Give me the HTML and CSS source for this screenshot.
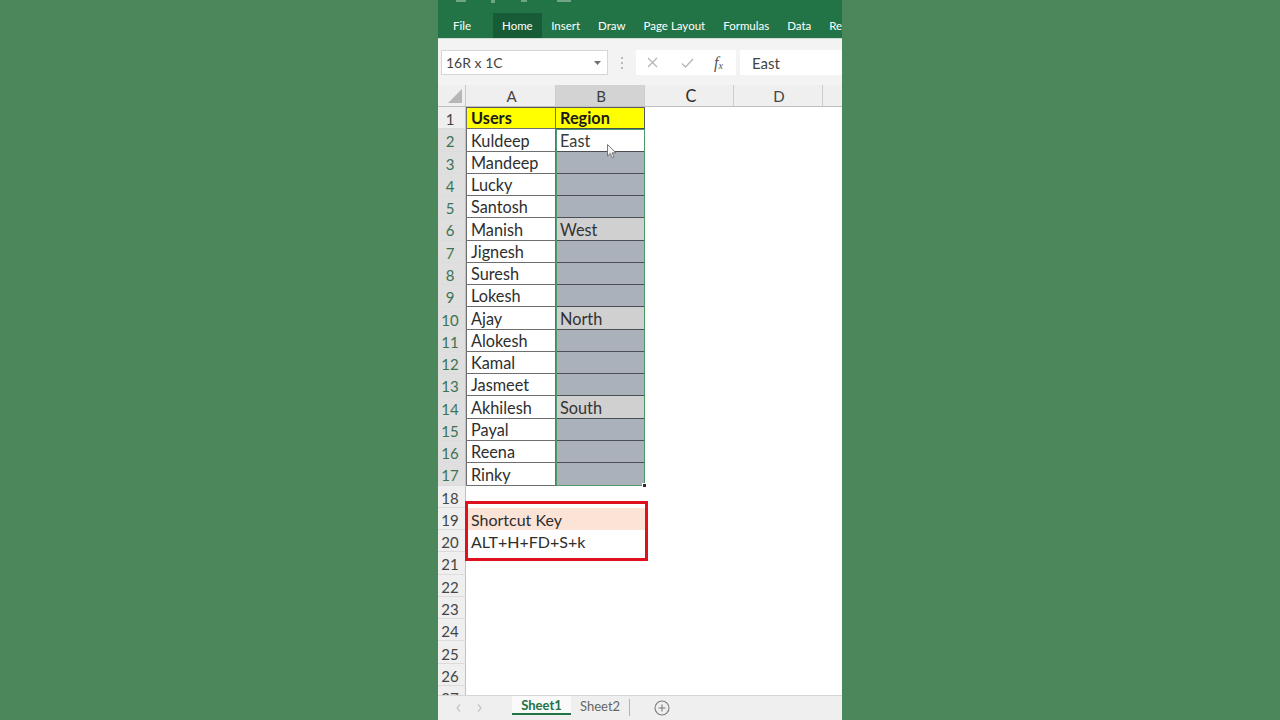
FILE: index.html
```html
<!DOCTYPE html>
<html lang="en">
<head>
<meta charset="utf-8">
<title>Excel - Region fill</title>
<link rel="stylesheet" href="styles.css">
</head>
<body>
<div class="app">
  <header class="ribbon">
    <div class="qat"><span class="q q1"></span><span class="q q2"></span><span class="q q3"></span><span class="q q4"></span></div>
    <nav class="tabs">
      <span class="tab file">File</span>
      <span class="tab active">Home</span>
      <span class="tab">Insert</span>
      <span class="tab">Draw</span>
      <span class="tab">Page Layout</span>
      <span class="tab">Formulas</span>
      <span class="tab">Data</span>
      <span class="tab">Re</span>
    </nav>
  </header>

  <div class="fbar">
    <div class="namebox">
      <span>16R x 1C</span>
      <svg class="dd" width="7" height="4" viewBox="0 0 7 4"><path d="M0 0H7L3.5 4Z" fill="#707070"/></svg>
    </div>
    <div class="vdots"><i></i><i></i><i></i></div>
    <div class="fxbtns">
      <svg class="btn-x" width="11" height="11" viewBox="0 0 11 11"><path d="M1 1L10 10M10 1L1 10" stroke="#b5b5b5" stroke-width="1.2" fill="none"/></svg>
      <svg class="btn-ok" width="13" height="10" viewBox="0 0 13 10"><path d="M1 5.5L4.5 9L12 1" stroke="#b5b5b5" stroke-width="1.3" fill="none"/></svg>
      <span class="fx"><i>f</i><sub>x</sub></span>
    </div>
    <div class="formula">East</div>
  </div>

  <div class="sheet">
    <div class="colhead">
      <div class="corner"><span class="tri"></span></div>
      <div class="ch a">A</div>
      <div class="ch b sel">B</div>
      <div class="ch c">C</div>
      <div class="ch d">D</div>
      <div class="ch e"></div>
    </div>

    <div class="rows">
      <div class="row"><div class="rh">1</div><div class="c a top hd">Users</div><div class="c b top hd">Region</div></div>
      <div class="row"><div class="rh s">2</div><div class="c a">Kuldeep</div><div class="c b w">East</div></div>
      <div class="row"><div class="rh s">3</div><div class="c a">Mandeep</div><div class="c b gb"></div></div>
      <div class="row"><div class="rh s">4</div><div class="c a">Lucky</div><div class="c b gb"></div></div>
      <div class="row"><div class="rh s">5</div><div class="c a">Santosh</div><div class="c b gb"></div></div>
      <div class="row"><div class="rh s">6</div><div class="c a">Manish</div><div class="c b lg">West</div></div>
      <div class="row"><div class="rh s">7</div><div class="c a">Jignesh</div><div class="c b gb"></div></div>
      <div class="row"><div class="rh s">8</div><div class="c a">Suresh</div><div class="c b gb"></div></div>
      <div class="row"><div class="rh s">9</div><div class="c a">Lokesh</div><div class="c b gb"></div></div>
      <div class="row"><div class="rh s">10</div><div class="c a">Ajay</div><div class="c b lg">North</div></div>
      <div class="row"><div class="rh s">11</div><div class="c a">Alokesh</div><div class="c b gb"></div></div>
      <div class="row"><div class="rh s">12</div><div class="c a">Kamal</div><div class="c b gb"></div></div>
      <div class="row"><div class="rh s">13</div><div class="c a">Jasmeet</div><div class="c b gb"></div></div>
      <div class="row"><div class="rh s">14</div><div class="c a">Akhilesh</div><div class="c b lg">South</div></div>
      <div class="row"><div class="rh s">15</div><div class="c a">Payal</div><div class="c b gb"></div></div>
      <div class="row"><div class="rh s">16</div><div class="c a">Reena</div><div class="c b gb"></div></div>
      <div class="row"><div class="rh s">17</div><div class="c a">Rinky</div><div class="c b gb"></div></div>
      <div class="row"><div class="rh">18</div></div>
      <div class="row"><div class="rh">19</div><div class="c ab peach">Shortcut Key</div></div>
      <div class="row"><div class="rh">20</div><div class="c ab">ALT+H+FD+S+k</div></div>
      <div class="row"><div class="rh">21</div></div>
      <div class="row"><div class="rh">22</div></div>
      <div class="row"><div class="rh">23</div></div>
      <div class="row"><div class="rh">24</div></div>
      <div class="row"><div class="rh">25</div></div>
      <div class="row"><div class="rh">26</div></div>
      <div class="row"><div class="rh">27</div></div>
    </div>

    <div class="selection"></div>
    <div class="handle"></div>
    <div class="redbox"></div>
    <svg class="cursor" width="10" height="15" viewBox="0 0 10 15"><path d="M0.5 0.5V12L3.3 9.4L5.2 13.8L7 13L5.2 8.8H9Z" fill="#f4f4f4" stroke="#6b6b6b" stroke-width="0.9" stroke-linejoin="round"/></svg>
  </div>

  <footer class="tabbar">
    <div class="nav">
      <svg width="5" height="8" viewBox="0 0 5 8"><path d="M4 0.5L1 4L4 7.5" stroke="#c4c4c4" stroke-width="1.2" fill="none"/></svg>
      <svg width="5" height="8" viewBox="0 0 5 8"><path d="M1 0.5L4 4L1 7.5" stroke="#c4c4c4" stroke-width="1.2" fill="none"/></svg>
    </div>
    <div class="stab active">Sheet1</div>
    <div class="stab">Sheet2</div>
    <div class="tsep"></div>
    <svg class="plus" width="16" height="16" viewBox="0 0 16 16"><circle cx="8" cy="8" r="7" stroke="#7a7a7a" stroke-width="1.1" fill="none"/><path d="M8 4.5V11.5M4.5 8H11.5" stroke="#7a7a7a" stroke-width="1.1"/></svg>
  </footer>
</div>
</body>
</html>
```

FILE: styles.css
```css
* { box-sizing: border-box; }
html, body { margin: 0; padding: 0; height: 100%; }
body {
  background: #4c875c;
  font-family: Lato, "Liberation Sans", sans-serif;
  overflow: hidden;
}
.app {
  width: 404px;
  height: 720px;
  margin-left: 438px;
  background: #fff;
  display: flex;
  flex-direction: column;
  overflow: hidden;
}

/* ribbon */
.ribbon {
  background: #227447;
  height: 39px;
  flex-shrink: 0;
  display: flex;
  flex-direction: column;
  border-bottom: 1px solid #cfdcd4;
}
.qat { height: 13px; display: flex; }
.q { display: block; height: 2px; background: rgba(255,255,255,0.35); }
.q1 { width: 10px; margin-left: 18px; }
.q2 { width: 4px; margin-left: 25px; height: 3px; }
.q3 { width: 6px; margin-left: 26px; }
.q4 { width: 14px; margin-left: 30px; }
.tabs {
  height: 25px;
  display: flex;
  align-items: stretch;
  padding-left: 6px;
  color: #fff;
  font-size: 11.5px;
  white-space: nowrap;
}
.tab { display: flex; align-items: center; padding: 0 9px; flex-shrink: 0; }
.tab.file { margin-right: 12.5px; }
.tab.active { background: #185c37; padding: 0 9.5px; }

/* formula bar */
.fbar {
  height: 46px;
  flex-shrink: 0;
  background: #f3f3f3;
  display: flex;
  align-items: flex-start;
  padding-top: 11px;
}
.namebox {
  margin-left: 3px;
  width: 167px;
  height: 25px;
  background: #fff;
  border: 1px solid #d6d6d6;
  display: flex;
  align-items: center;
  justify-content: space-between;
  padding: 0 6px 0 4px;
  font-size: 14px;
  color: #444;
}
.vdots {
  width: 28px;
  height: 25px;
  display: flex;
  flex-direction: column;
  align-items: center;
  justify-content: center;
  gap: 3px;
}
.vdots i { display: block; width: 2px; height: 2px; background: #b9b9b9; }
.fxbtns {
  width: 100px;
  height: 25px;
  background: #fff;
  display: flex;
  align-items: center;
  padding-left: 11px;
}
.btn-x { margin-right: 23px; }
.btn-ok { margin-right: 20px; }
.fx {
  font-family: "Liberation Serif", serif;
  font-size: 16px;
  color: #555;
  line-height: 1;
}
.fx sub { font-size: 10px; font-style: italic; vertical-align: -1px; }
.formula {
  margin-left: 4px;
  flex: 1;
  height: 25px;
  background: #fff;
  display: flex;
  align-items: center;
  padding-left: 12px;
  font-size: 15px;
  color: #444;
}

/* sheet */
.sheet {
  height: 610px;
  flex-shrink: 0;
  position: relative;
  overflow: hidden;
  background: #fff;
}
.colhead {
  height: 22px;
  display: flex;
  background: #efefef;
  border-bottom: 1px solid #bfbfbf;
}
.corner {
  width: 28px;
  border-right: 1px solid #c9c9c9;
  display: flex;
  align-items: flex-end;
  justify-content: flex-end;
  padding: 0 3px 3px 0;
}
.tri {
  display: block;
  width: 14px;
  height: 14px;
  background: #b6b6b6;
  clip-path: polygon(100% 0, 100% 100%, 0 100%);
}
.ch {
  border-right: 1px solid #cdcdcd;
  display: flex;
  align-items: center;
  justify-content: center;
  font-size: 15px;
  color: #454545;
  padding: 1px 0 0 2px;
}
.ch.a { width: 90px; }
.ch.b, .ch.c, .ch.d { width: 89px; }
.ch.e { flex: 1; border-right: 0; }
.ch.sel { background: #d3d3d3; color: #3d3d3d; }

.rows { display: flex; flex-direction: column; }
.row { height: 22.28px; flex-shrink: 0; display: flex; }
.rh {
  width: 28px;
  flex-shrink: 0;
  background: #efefef;
  border-right: 1px solid #c2c2c2;
  border-bottom: 1px solid #dcdcdc;
  display: flex;
  align-items: center;
  justify-content: center;
  padding: 3px 3px 0 0;
  font-size: 15px;
  color: #444;
}
.rh.s { background: #dfdfdf; color: #3c7352; }

.c {
  display: flex;
  align-items: flex-end;
  padding: 0 0 0 4px;
  font-size: 16.3px;
  line-height: 20px;
  color: #2e2e2e;
  white-space: nowrap;
  flex-shrink: 0;
}
.c.a {
  width: 90px;
  border-left: 1px solid #6f6f6f;
  border-right: 1px solid #6f6f6f;
  border-bottom: 1px solid #6f6f6f;
}
.c.b {
  width: 89px;
  border-right: 1px solid #555a60;
  border-bottom: 1px solid #4a4f55;
}
.c.top { border-top: 1px solid #5a5a5a; }
.c.hd { background: #ffff00; font-weight: 700; color: #1a1a1a; }
.c.w { background: #fff; color: #3a3a3a; }
.c.gb { background: #aab1bb; }
.c.lg { background: #d0d0d0; color: #333; }
.c.ab { width: 179px; padding-left: 5px; font-size: 16px; }
.c.peach { background: #fbe3d6; }

/* overlays */
.selection {
  position: absolute;
  left: 118px;
  top: 44.3px;
  width: 89px;
  height: 357px;
  border: 1px solid #4f9a6b;
  pointer-events: none;
}
.handle {
  position: absolute;
  left: 204px;
  top: 398px;
  width: 5px;
  height: 5px;
  background: #2a2a2a;
  border: 1px solid #fff;
}
.redbox {
  position: absolute;
  left: 27px;
  top: 416px;
  width: 183px;
  height: 60px;
  border: 3px solid #e0111e;
}
.cursor { position: absolute; left: 169px; top: 59px; }

/* sheet tabs */
.tabbar {
  flex: 1;
  background: #efefef;
  border-top: 1px solid #d6d6d6;
  display: flex;
  align-items: flex-start;
  font-size: 13px;
}
.nav {
  width: 74px;
  height: 24px;
  display: flex;
  align-items: center;
  padding-left: 18px;
  gap: 16px;
}
.stab {
  height: 19px;
  display: flex;
  align-items: center;
  padding: 1px 9px 0;
  color: #666;
}
.stab.active {
  width: 59px;
  justify-content: center;
  background: #fafafa;
  border-bottom: 2px solid #217346;
  color: #217346;
  font-weight: 700;
}
.tsep { width: 1px; height: 17px; margin: 3px 0 0 0; background: #b3b3b3; }
.plus { margin: 4px 0 0 24px; }
```
